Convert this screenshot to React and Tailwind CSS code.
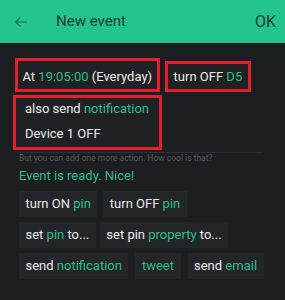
import React from "react";

const G = "text-[#2bbf8c]";

function Btn({ children, className = "" }) {
  return (
    <div className={`h-[26px] flex items-center px-[6.5px] bg-[#232529] text-[13px] text-[#ececec] whitespace-nowrap ${className}`}>
      {children}
    </div>
  );
}

export default function App() {
  return (
    <div className="w-[285px] h-[300px] overflow-hidden bg-[#1d1e22] font-['Roboto',sans-serif] text-[#ececec]">
      <div className="h-[43px] bg-[#23c48e] flex items-center pl-[15px] pr-[9px] text-[#173d31]">
        <svg width="12" height="10" viewBox="0 0 12 10" fill="none" stroke="#236b52" strokeWidth="1.1" strokeLinecap="round" strokeLinejoin="round">
          <path d="M11.5 5H0.8M5 0.8L0.8 5L5 9.2" />
        </svg>
        <span className="ml-[29px] text-[15px]">New event</span>
        <span className="ml-auto text-[16px]">OK</span>
      </div>

      <div className="flex items-end mt-[15px] pl-[15px]">
        <div className="h-[34px] border-[3px] border-[#e1202b] bg-[#202125] flex items-center pt-[3px] px-[4.5px] text-[13px] whitespace-nowrap">
          At&nbsp;<span className={G}>19:05:00</span>&nbsp;(Everyday)
        </div>
        <div className="ml-[5px] h-[31px] border-[3px] border-[#e1202b] bg-[#202125] flex items-center pt-[1px] px-[6px] text-[13px] whitespace-nowrap">
          turn OFF&nbsp;<span className={G}>D5</span>
        </div>
      </div>

      <div className="mt-[3px] ml-[13px] w-[149px] h-[55px] border-[3px] border-[#e1202b] bg-[#202125] flex flex-col gap-[7px] pt-[1.5px] pl-[9px] text-[13px]">
        <div className="leading-[18px] whitespace-nowrap">
          also send <span className={G}>notification</span>
        </div>
        <div className="leading-[18px] whitespace-nowrap">Device 1 OFF</div>
      </div>

      <div className="mt-[2px] ml-[18px] w-[245px] h-px bg-[#2c2e33]" />
      <div className="ml-[19px] text-[8.5px] leading-[11px] text-[#55585e] whitespace-nowrap">
        But you can add one more action. How cool is that?
      </div>
      <div className={`mt-[3px] ml-[19px] text-[13px] leading-[18px] ${G}`}>Event is ready. Nice!</div>

      <div className="mt-[6px] ml-[19px] flex flex-col gap-[5px]">
        <div className="flex gap-[6px]">
          <Btn>turn ON&nbsp;<span className={G}>pin</span></Btn>
          <Btn>turn OFF&nbsp;<span className={G}>pin</span></Btn>
        </div>
        <div className="flex gap-[4px]">
          <Btn>set&nbsp;<span className={G}>pin</span>&nbsp;to...</Btn>
          <Btn>set pin&nbsp;<span className={G}>property</span>&nbsp;to...</Btn>
        </div>
        <div className="flex gap-[7px]">
          <Btn>send&nbsp;<span className={G}>notification</span></Btn>
          <Btn><span className={G}>tweet</span></Btn>
          <Btn>send&nbsp;<span className={G}>email</span></Btn>
        </div>
      </div>
    </div>
  );
}
